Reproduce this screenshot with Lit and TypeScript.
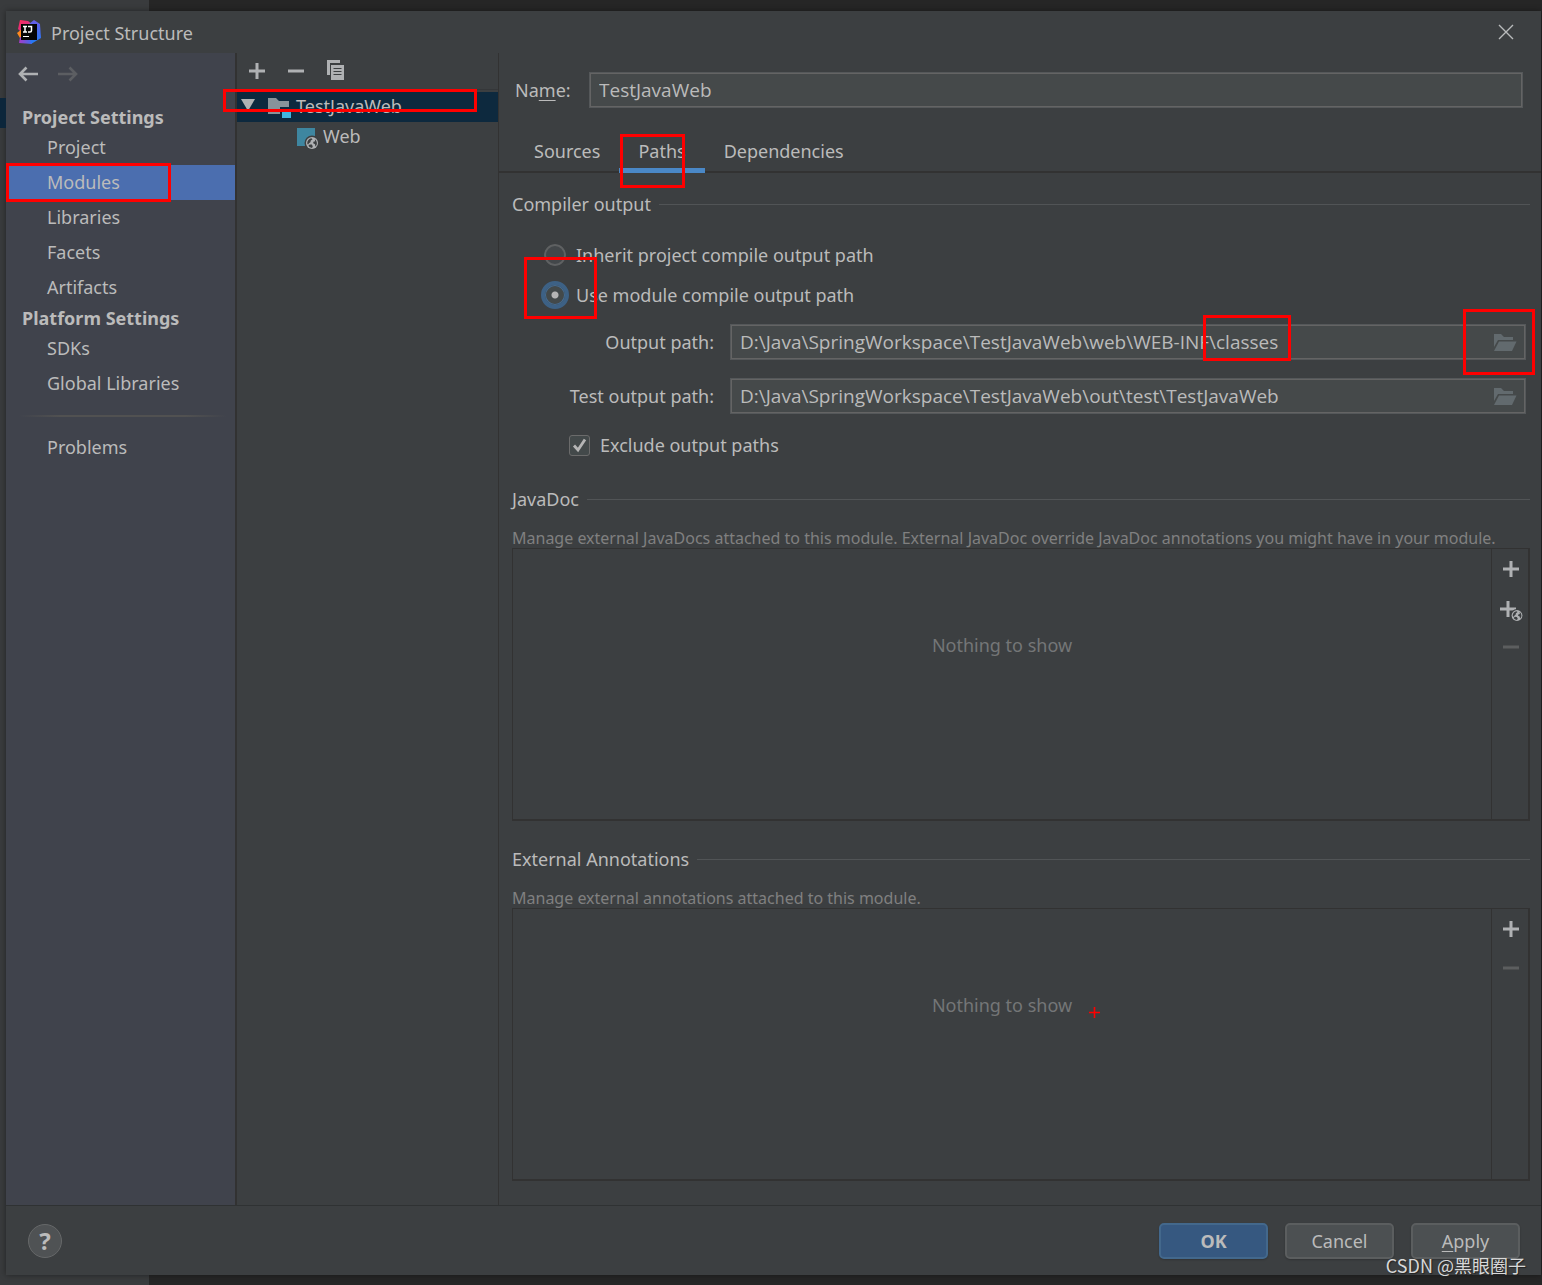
import { LitElement, html, css, svg, nothing } from "lit";
import { customElement, state } from "lit/decorators.js";
import { classMap } from "lit/directives/class-map.js";

const globe = (cx: number, cy: number, r: number) => svg`
  <g transform="translate(${cx} ${cy}) scale(${r / 6})">
    <circle r="6" fill="#afb1b3"></circle>
    <path d="M-4.800 .4C-4.800 -2.200 -3 -4.400 -.6 -4.800L.6 -3.800L-1.200 -2.400L-1.600 -.8L-3 .2L-4 1.800Z" fill="#3c3f41"></path>
    <path d="M-2.400 1.400L-.2 1.600L.8 3.200L0 4.900C-1.800 4.800 -3 3.800 -3.600 2.800Z" fill="#3c3f41"></path>
    <path d="M2.800 -3.800C4.200 -2.800 4.900 -1.400 4.900 .4C4.800 1.800 4.200 2.800 3.400 3.400L3 1.200L1.200 .2L1.400 -1.200L3.200 -1.800Z" fill="#3c3f41"></path>
  </g>`;

const icons = {
  logo: html`<svg viewBox="0 0 24 24" width="24" height="24" aria-hidden="true">
    <defs>
      <linearGradient id="warm" x1="0" y1="0" x2="1" y2="1">
        <stop offset="0" stop-color="#ff2d55"></stop><stop offset="1" stop-color="#c12fb0"></stop>
      </linearGradient>
      <linearGradient id="cool" x1="0" y1="0" x2="0" y2="1">
        <stop offset="0" stop-color="#6a5de8"></stop><stop offset="1" stop-color="#1f7cf5"></stop>
      </linearGradient>
      <linearGradient id="plum" x1="0" y1="0" x2="1" y2="0">
        <stop offset="0" stop-color="#a93bc4"></stop><stop offset="1" stop-color="#3a6cf0"></stop>
      </linearGradient>
    </defs>
    <path d="M3 0L11 1L16 5L5 13L1 9Z" fill="url(#warm)"></path>
    <path d="M17 0L23 4L24 18L14 24L9 19L12 4Z" fill="url(#cool)"></path>
    <path d="M0 13L5 9L6 18L3 18Z" fill="#ff8a1f"></path>
    <path d="M3 17L12 18L15 24L2 23Z" fill="url(#plum)"></path>
    <rect x="4" y="4" width="16" height="16" fill="#050505"></rect>
    <path d="M6 6.500H10M8 6V12.500M6 12H10M11 6.500H14.500V10.500Q14.500 12 13 12H11" fill="none" stroke="#fff" stroke-width="1.500"></path>
    <rect x="6" y="16" width="6" height="1" fill="#fff"></rect>
  </svg>`,
  close: html`<svg viewBox="0 0 16 16" width="16" height="16" aria-hidden="true">
    <path d="M1 1L15 15M15 1L1 15" stroke="#b9bbbc" stroke-width="1.400"></path></svg>`,
  back: html`<svg viewBox="0 0 20 16" width="20" height="16" aria-hidden="true">
    <path d="M20 8H2M8.500 1.500L2 8L8.500 14.500" fill="none" stroke="currentColor" stroke-width="2.600"></path></svg>`,
  forward: html`<svg viewBox="0 0 20 16" width="20" height="16" aria-hidden="true">
    <path d="M0 8H18M11.500 1.500L18 8L11.500 14.500" fill="none" stroke="currentColor" stroke-width="2.600"></path></svg>`,
  plus: html`<svg viewBox="0 0 16 16" width="16" height="16" aria-hidden="true">
    <path d="M0 8H16M8 0V16" stroke="currentColor" stroke-width="3"></path></svg>`,
  minus: html`<svg viewBox="0 0 16 16" width="16" height="16" aria-hidden="true">
    <path d="M0 8H16" stroke="currentColor" stroke-width="3"></path></svg>`,
  copy: html`<svg viewBox="1 0 18 22" width="18" height="22" aria-hidden="true">
    <path d="M1 0H14V3H4V15H1Z" fill="#afb1b3"></path>
    <path d="M5 5H18V20H5Z" fill="#afb1b3"></path>
    <path d="M7.500 8.500H15.500M7.500 11.500H15.500M7.500 14.500H15.500" stroke="#3c3f41" stroke-width="1.200"></path></svg>`,
  plusGlobe: html`<svg viewBox="0 0 24 22" width="24" height="22" aria-hidden="true">
    <path d="M1 9H17M9 1V17" stroke="#afb1b3" stroke-width="3"></path>
    <circle cx="18" cy="15.500" r="6.500" fill="#3c3f41"></circle>
    ${globe(18, 15.5, 5.4)}</svg>`,
  arrow: html`<svg viewBox="0 0 14 16" width="14" height="16" aria-hidden="true">
    <path d="M0 0H14L7 12Z" fill="#afb1b3"></path></svg>`,
  module: html`<svg viewBox="0 0 24 22" width="24" height="22" aria-hidden="true">
    <path d="M1 2H9L12 5H22V18H1Z" fill="#87939a"></path>
    <path d="M13 11H24V22H13Z" fill="#0d293e"></path>
    <path d="M15 13H24V22H15Z" fill="#40b6e0"></path></svg>`,
  web: html`<svg viewBox="0 -3 22 24" width="22" height="24" aria-hidden="true">
    <path d="M0 0H18V18H0Z" fill="#3e86a0"></path>
    <circle cx="15" cy="15" r="7.500" fill="#3c3f41"></circle>
    ${globe(15, 15, 6)}</svg>`,
  folder: html`<svg viewBox="0 -2 24 20" width="24" height="20" aria-hidden="true">
    <path d="M1 0H8L11 3H20V6H5L1 13Z" fill="#626a6e"></path>
    <path d="M6 7.500H23.500L19 17H1Z" fill="#626a6e"></path></svg>`,
};

@customElement("app-root")
export class AppRoot extends LitElement {
  @state() private section = "Modules";
  @state() private tab = "Paths";

  static styles = css`
    :host {
      display: block;
      --panel: #3c3f41;
      --line: #323232;
      --text: #bbbbbb;
      --muted: #808080;
      font: 18px/24px "Noto Sans", "Open Sans", "Noto Sans CJK SC", sans-serif;
      color: var(--text);
    }
    * { box-sizing: border-box; }
    svg { display: block; flex: none; }
    button, input { font: inherit; color: inherit; }
    button { background: none; border: 0; padding: 0; cursor: pointer; }
    a { color: inherit; text-decoration: none; }
    u { text-underline-offset: 3px; text-decoration-thickness: 1px; }

    .desktop {
      position: relative;
      min-height: 100vh;
      display: flex;
      padding: 11px 1px 10px 6px;
      background: linear-gradient(90deg, #393b3d 149px, #262626 149px);
    }
    .edge {
      position: absolute;
      left: 0;
      top: 98px;
      width: 6px;
      height: 30px;
      background: #0c263b;
    }
    .dialog {
      flex: 1;
      min-width: 0;
      display: flex;
      flex-direction: column;
      background: var(--panel);
      box-shadow: 0 0 6px rgba(0, 0, 0, 0.4);
    }
    .titlebar {
      height: 42px;
      display: flex;
      align-items: center;
      gap: 10px;
      padding: 0 27px 0 11px;
    }
    .titlebar h1 { flex: 1; margin: 0; padding-top: 1px; font-size: 18px; font-weight: 400; }
    .body { flex: 1; display: flex; min-height: 0; border-bottom: 1px solid #2f3233; }

    .sidebar {
      width: 231px;
      flex: none;
      background: #40434c;
      border-right: 2px solid var(--line);
    }
    .history {
      height: 42px;
      margin-bottom: 9px;
      padding: 0 12px;
      display: flex;
      align-items: center;
      gap: 20px;
      color: #afb1b3;
    }
    .history button:disabled { color: #5c5e62; }
    .sidebar h2 {
      margin: 0;
      padding-left: 16px;
      font-size: 18px;
      line-height: 26px;
      font-weight: 700;
    }
    .item { display: block; padding-left: 41px; line-height: 35px; }
    .item.active { background: #4b6eaf; }
    .divider {
      height: 2px;
      margin: 14px 8px 13px 13px;
      background: linear-gradient(90deg, transparent, #515151 20%, #515151 80%, transparent);
    }

    .tree { width: 262px; flex: none; border-right: 1px solid var(--line); }
    .tools {
      height: 37px;
      margin-bottom: 2px;
      padding-left: 12px;
      display: flex;
      align-items: center;
      gap: 23px;
      color: #afb1b3;
      border-bottom: 1px solid #353739;
    }
    .node { width: 100%; height: 30px; display: flex; align-items: center; text-align: left; }
    .node span { padding-bottom: 2px; }
    .node.root { gap: 5px; padding-left: 4px; background: #0d293e; }
    .node.root svg + svg { margin-left: 7px; }
    .node.child { gap: 4px; padding-left: 60px; }

    .detail { flex: 1; min-width: 0; display: flex; flex-direction: column; padding-top: 19px; }
    .name { display: flex; align-items: center; padding: 0 18px 0 16px; }
    .name label { width: 74px; }
    .field {
      flex: 1;
      min-width: 0;
      width: 100%;
      height: 36px;
      display: flex;
      align-items: center;
      background: #45494a;
      border: 1px solid #55585a;
      box-shadow: inset 0 0 0 1px #646464;
      border-radius: 0;
      outline: 0;
      font-family: "Open Sans", "Noto Sans", sans-serif;
      font-size: 19px;
    }
    input.field { padding: 0 9px; }
    .field input {
      flex: 1;
      min-width: 0;
      height: 100%;
      padding: 0 9px;
      background: none;
      border: 0;
      outline: 0;
    }
    .field button { padding-right: 8px; }

    .tabs {
      display: flex;
      height: 43px;
      margin-top: 22px;
      padding-left: 16px;
      border-bottom: 2px solid var(--line);
    }
    .tabs button { height: 43px; padding: 3px 19px 0; border-bottom: 5px solid transparent; }
    .tabs button.active { border-bottom-color: #4a88c7; }

    .content { flex: 1; display: flex; flex-direction: column; padding: 19px 11px 24px 13px; }
    .legend {
      display: flex;
      align-items: center;
      gap: 8px;
      margin: 0;
      font-size: 18px;
      line-height: 24px;
      font-weight: 400;
    }
    .legend::after { content: ""; flex: 1; height: 1px; background: #515456; }
    .options { padding: 19px 4px 0 54px; margin-bottom: 29px; }
    .choice { display: flex; align-items: center; height: 40px; margin-left: -25px; gap: 7px; }
    .choice input {
      appearance: none;
      width: 28px;
      height: 28px;
      margin: 0;
      border: 3px solid var(--panel);
      border-radius: 50%;
      background: #43474a;
      box-shadow: inset 0 0 0 2px #5f6162;
    }
    .choice input:checked {
      border: 4px solid #3d6185;
      background: radial-gradient(circle, #b5b5b5 3px, #43494a 4px);
      box-shadow: inset 0 0 0 1px #466d94;
    }
    .path { display: flex; align-items: center; gap: 16px; margin-bottom: 18px; }
    .path:first-of-type { margin-top: 9px; }
    .path label { width: 148px; flex: none; text-align: right; white-space: nowrap; }
    .exclude { display: flex; align-items: center; gap: 10px; padding-left: 3px; height: 26px; }
    .check { display: grid; width: 21px; height: 21px; }
    .check > * { grid-area: 1 / 1; }
    .check input {
      appearance: none;
      width: 21px;
      height: 21px;
      margin: 0;
      border: 1px solid #6b6b6b;
      border-radius: 3px;
      background: #43494a;
    }
    .check svg { pointer-events: none; }

    .hint { margin: 17px 0 0; font-size: 16px; line-height: 20px; color: var(--muted); white-space: nowrap; }
    .list {
      flex: 1;
      min-height: 140px;
      display: flex;
      border: 1px solid var(--line);
      border-right-width: 2px;
      border-bottom-width: 2px;
    }
    .list + .legend { margin-top: 26px; }
    .empty { flex: 1; margin: 0; padding-top: 84px; text-align: center; color: #747677; }
    .side {
      width: 37px;
      display: flex;
      flex-direction: column;
      align-items: center;
      gap: 23px;
      padding: 12px 0 0 2px;
      border-left: 1px solid var(--line);
      color: #afb1b3;
    }
    .side button:disabled { color: #5c5e5f; }
    .side .wide { height: 16px; }

    .footer { height: 69px; display: flex; align-items: center; gap: 17px; padding: 0 21px 0 22px; }
    .help {
      width: 34px;
      height: 34px;
      margin-right: auto;
      border: 1px solid #666869;
      border-radius: 50%;
      background: #4f5254;
      font-size: 24px;
      font-weight: 700;
    }
    .action {
      width: 109px;
      height: 36px;
      padding-top: 1px;
      border: 2px solid #5b5e5f;
      border-radius: 5px;
      background: #4c5052;
      box-shadow: 0 1px 2px rgba(0, 0, 0, 0.2);
    }
    .action.primary { background: #365880; border-color: #43688c; font-weight: 700; }

    /* Hand-drawn review marks floating above the dialog */
    .mark { position: absolute; border: 3px solid #ff0000; pointer-events: none; }
    .m-modules { left: 6px; top: 163px; width: 165px; height: 39px; }
    .m-tree { left: 223px; top: 89px; width: 254px; height: 23px; }
    .m-tab { left: 620px; top: 134px; width: 65px; height: 54px; }
    .m-radio { left: 524px; top: 257px; width: 73px; height: 62px; }
    .m-classes { left: 1203px; top: 315px; width: 88px; height: 46px; }
    .m-browse { right: 7px; top: 309px; width: 72px; height: 66px; }
    .cross { position: absolute; left: 1089px; top: 1007px; pointer-events: none; }
    .watermark {
      position: absolute;
      right: 16px;
      bottom: 8px;
      font: 18px/24px "Noto Sans CJK SC", sans-serif;
      color: #d8d8d8;
      text-shadow: 1px 1px 1px #222;
      pointer-events: none;
    }
  `;

  private navItem(name: string) {
    return html`<a
      href="#${name.toLowerCase().replace(" ", "-")}"
      class=${classMap({ item: true, active: this.section === name })}
      @click=${() => (this.section = name)}
      >${name}</a>`;
  }

  private pathField(id: string, label: string, value: string) {
    return html`<div class="path">
      <label for=${id}>${label}</label>
      <div class="field">
        <input id=${id} type="text" .value=${value} />
        <button aria-label="Browse">${icons.folder}</button>
      </div>
    </div>`;
  }

  private list(withUrl: boolean) {
    return html`<div class="list">
      <p class="empty">Nothing to show</p>
      <div class="side">
        <button aria-label="Add">${icons.plus}</button>
        ${withUrl ? html`<button class="wide" aria-label="Add URL">${icons.plusGlobe}</button>` : nothing}
        <button aria-label="Remove" disabled>${icons.minus}</button>
      </div>
    </div>`;
  }

  render() {
    return html`<div class="desktop">
      <div class="edge"></div>
      <main class="dialog">
        <header class="titlebar">
          ${icons.logo}
          <h1>Project Structure</h1>
          <button aria-label="Close">${icons.close}</button>
        </header>
        <div class="body">
          <nav class="sidebar">
            <div class="history">
              <button aria-label="Back">${icons.back}</button>
              <button aria-label="Forward" disabled>${icons.forward}</button>
            </div>
            <h2>Project Settings</h2>
            ${["Project", "Modules", "Libraries", "Facets", "Artifacts"].map((n) => this.navItem(n))}
            <h2>Platform Settings</h2>
            ${["SDKs", "Global Libraries"].map((n) => this.navItem(n))}
            <div class="divider"></div>
            ${this.navItem("Problems")}
          </nav>
          <section class="tree" aria-label="Modules">
            <div class="tools">
              <button aria-label="Add">${icons.plus}</button>
              <button aria-label="Remove">${icons.minus}</button>
              <button aria-label="Copy">${icons.copy}</button>
            </div>
            <button class="node root">${icons.arrow}${icons.module}<span>TestJavaWeb</span></button>
            <button class="node child">${icons.web}<span>Web</span></button>
          </section>
          <section class="detail">
            <div class="name">
              <label for="name">Na<u>m</u>e:</label>
              <input id="name" class="field" type="text" .value=${"TestJavaWeb"} />
            </div>
            <div class="tabs" role="tablist">
              ${["Sources", "Paths", "Dependencies"].map(
                (t) => html`<button
                  role="tab"
                  aria-selected=${this.tab === t}
                  class=${classMap({ active: this.tab === t })}
                  @click=${() => (this.tab = t)}
                >${t}</button>`
              )}
            </div>
            <div class="content">
              <h3 class="legend">Compiler output</h3>
              <div class="options">
                <label class="choice"><input type="radio" name="output" />Inherit project compile output path</label>
                <label class="choice"><input type="radio" name="output" checked />Use module compile output path</label>
                ${this.pathField("out", "Output path:", "D:\\Java\\SpringWorkspace\\TestJavaWeb\\web\\WEB-INF\\classes")}
                ${this.pathField("test", "Test output path:", "D:\\Java\\SpringWorkspace\\TestJavaWeb\\out\\test\\TestJavaWeb")}
                <label class="exclude">
                  <span class="check">
                    <input type="checkbox" checked />
                    <svg viewBox="0 0 21 21" width="21" height="21" aria-hidden="true">
                      <path d="M5 10.500L9 15L16 4.500" fill="none" stroke="#b5b5b5" stroke-width="2.800"></path>
                    </svg>
                  </span>
                  Exclude output paths
                </label>
              </div>
              <h3 class="legend">JavaDoc</h3>
              <p class="hint">Manage external JavaDocs attached to this module. External JavaDoc override JavaDoc annotations you might have in your module.</p>
              ${this.list(true)}
              <h3 class="legend">External Annotations</h3>
              <p class="hint">Manage external annotations attached to this module.</p>
              ${this.list(false)}
            </div>
          </section>
        </div>
        <footer class="footer">
          <button class="help" aria-label="Help">?</button>
          <button class="action primary">OK</button>
          <button class="action">Cancel</button>
          <button class="action"><u>A</u>pply</button>
        </footer>
      </main>
      <div class="mark m-modules"></div>
      <div class="mark m-tree"></div>
      <div class="mark m-tab"></div>
      <div class="mark m-radio"></div>
      <div class="mark m-classes"></div>
      <div class="mark m-browse"></div>
      <svg class="cross" viewBox="0 0 11 11" width="11" height="11" aria-hidden="true">
        <path d="M0 5.500H11M5.500 0V11" stroke="#ff0000" stroke-width="1.600"></path>
      </svg>
      <div class="watermark">CSDN @黑眼圈子</div>
    </div>`;
  }
}
